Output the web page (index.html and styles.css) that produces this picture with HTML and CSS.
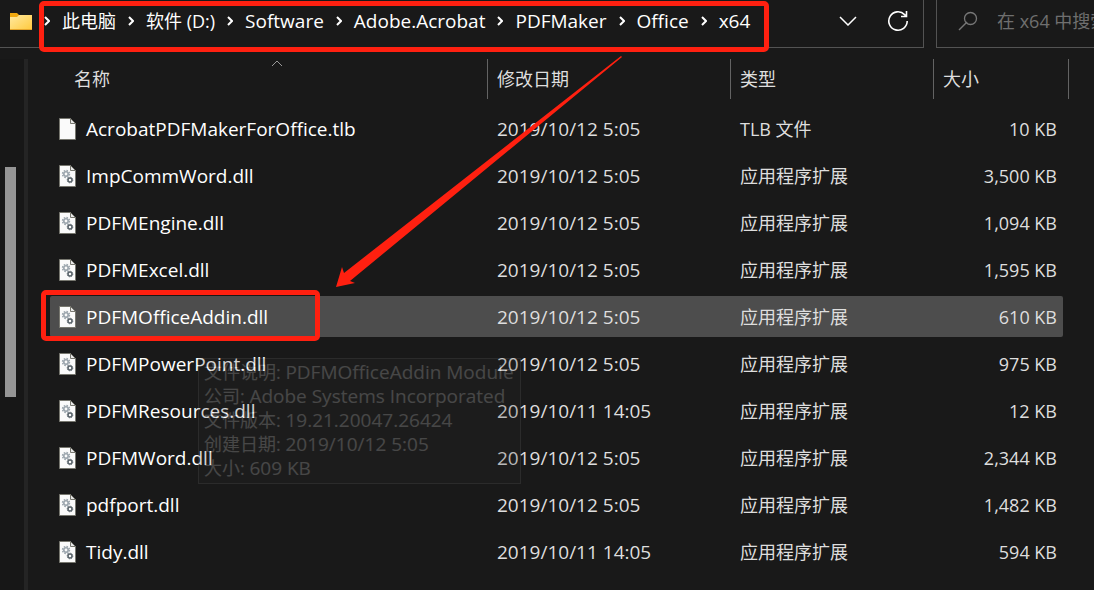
FILE: index.html
```
<!DOCTYPE html>
<html lang="zh-CN">

<head>
    <meta charset="utf-8">
    <title>x64</title>
    <link rel="stylesheet" href="styles.css">
</head>

<body>
    <!-- 公用图标 -->
    <svg class="symbols" aria-hidden="true">
        <symbol id="sep" viewBox="0 0 6 10">
            <path d="M1 1l4 4-4 4" fill="none" stroke="#fff" stroke-width="2"/>
        </symbol>
        <symbol id="file" viewBox="0 0 17 22">
            <path d="M.5.5h11l5 5v16H.5z" fill="#fafafa" stroke="#77776f"/>
            <path d="M11.5.5v5h5z" fill="#e8e8e8" stroke="#77776f"/>
        </symbol>
        <symbol id="dll" viewBox="0 0 17 22">
            <use href="#file"/>
            <circle cx="7" cy="9" r="3.5" fill="none" stroke="#9aa4ac" stroke-width="1.4" stroke-dasharray="1.6 1.15"/>
            <circle cx="7" cy="9" r="2.2" fill="none" stroke="#9aa4ac" stroke-width="1.6"/>
            <circle cx="11" cy="15" r="2.8" fill="none" stroke="#6b747b" stroke-width="1" stroke-dasharray="1.2 1"/>
            <circle cx="11" cy="15" r="2" fill="none" stroke="#59636a" stroke-width="1.5"/>
        </symbol>
    </svg>

    <div class="topbar">
        <div class="address">
            <svg class="folder" viewBox="0 0 22 17">
                <defs>
                    <linearGradient id="gold" x1="0" y1="0" x2="1" y2="1">
                        <stop offset="0" stop-color="#ffe9a0"/>
                        <stop offset="1" stop-color="#ffc93c"/>
                    </linearGradient>
                </defs>
                <path d="M0 0h7l2 2h13v5H0z" fill="#f0a80e"/>
                <path d="M0 4h7l2-2h13v15H0z" fill="url(#gold)"/>
                <path d="M0 16h22v1H0z" fill="#e5a52a"/>
            </svg>
            <nav class="crumbs">
                <svg><use href="#sep"/></svg>
                <a href="#" class="cn">此电脑</a>
                <svg><use href="#sep"/></svg>
                <a href="#" class="cn">软件 (D:)</a>
                <svg><use href="#sep"/></svg>
                <a href="#">Software</a>
                <svg><use href="#sep"/></svg>
                <a href="#">Adobe.Acrobat</a>
                <svg><use href="#sep"/></svg>
                <a href="#">PDFMaker</a>
                <svg><use href="#sep"/></svg>
                <a href="#">Office</a>
                <svg><use href="#sep"/></svg>
                <a href="#">x64</a>
            </nav>
            <button class="tool" aria-label="以前的位置">
                <svg width="18" height="10" viewBox="0 0 18 10">
                    <path d="M1 1l8 8 8-8" fill="none" stroke="#fff" stroke-width="1.5"/>
                </svg>
            </button>
            <button class="tool" aria-label="刷新">
                <svg width="22" height="22" viewBox="0 0 22 22">
                    <path d="M20.2 11a9.2 9.2 0 1 1-2.6-6.4l1.9 1.9M19.5 1v5.5H14" fill="none" stroke="#fff" stroke-width="1.6"/>
                </svg>
            </button>
        </div>
        <label class="search">
            <svg width="20" height="20" viewBox="0 0 20 20">
                <path d="M9 11L1 19" stroke="#777" stroke-width="1.4"/>
                <circle cx="12.5" cy="7.5" r="6" fill="none" stroke="#777" stroke-width="1.3"/>
            </svg>
            <input type="text" placeholder="在 x64 中搜索" aria-label="在 x64 中搜索">
        </label>
    </div>

    <div class="main">
        <div class="tree">
            <div class="thumb"></div>
        </div>
        <table class="list">
            <colgroup>
                <col>
                <col class="date">
                <col class="type">
                <col class="size">
                <col class="end">
            </colgroup>
            <thead>
                <tr>
                    <th class="name">
                        <div>名称
                            <svg class="sort" width="12" height="7" viewBox="0 0 12 7">
                                <path d="M1 6l5-5 5 5" fill="none" stroke="#999"/>
                            </svg>
                        </div>
                    </th>
                    <th><div>修改日期</div></th>
                    <th><div>类型</div></th>
                    <th colspan="2"><div>大小</div></th>
                </tr>
            </thead>
            <tbody>
                <tr>
                    <td><svg><use href="#file"/></svg>AcrobatPDFMakerForOffice.tlb</td>
                    <td>2019/10/12 5:05</td>
                    <td>TLB 文件</td>
                    <td>10 KB</td>
                    <td class="tail"></td>
                </tr>
                <tr>
                    <td><svg><use href="#dll"/></svg>ImpCommWord.dll</td>
                    <td>2019/10/12 5:05</td>
                    <td>应用程序扩展</td>
                    <td>3,500 KB</td>
                    <td class="tail"></td>
                </tr>
                <tr>
                    <td><svg><use href="#dll"/></svg>PDFMEngine.dll</td>
                    <td>2019/10/12 5:05</td>
                    <td>应用程序扩展</td>
                    <td>1,094 KB</td>
                    <td class="tail"></td>
                </tr>
                <tr>
                    <td><svg><use href="#dll"/></svg>PDFMExcel.dll</td>
                    <td>2019/10/12 5:05</td>
                    <td>应用程序扩展</td>
                    <td>1,595 KB</td>
                    <td class="tail"></td>
                </tr>
                <tr class="current">
                    <td><svg><use href="#dll"/></svg>PDFMOfficeAddin.dll</td>
                    <td>2019/10/12 5:05</td>
                    <td>应用程序扩展</td>
                    <td>610 KB</td>
                    <td class="tail"></td>
                </tr>
                <tr>
                    <td><svg><use href="#dll"/></svg>PDFMPowerPoint.dll</td>
                    <td>2019/10/12 5:05</td>
                    <td>应用程序扩展</td>
                    <td>975 KB</td>
                    <td class="tail"></td>
                </tr>
                <tr>
                    <td><svg><use href="#dll"/></svg>PDFMResources.dll</td>
                    <td>2019/10/11 14:05</td>
                    <td>应用程序扩展</td>
                    <td>12 KB</td>
                    <td class="tail"></td>
                </tr>
                <tr>
                    <td><svg><use href="#dll"/></svg>PDFMWord.dll</td>
                    <td>2019/10/12 5:05</td>
                    <td>应用程序扩展</td>
                    <td>2,344 KB</td>
                    <td class="tail"></td>
                </tr>
                <tr>
                    <td><svg><use href="#dll"/></svg>pdfport.dll</td>
                    <td>2019/10/12 5:05</td>
                    <td>应用程序扩展</td>
                    <td>1,482 KB</td>
                    <td class="tail"></td>
                </tr>
                <tr>
                    <td><svg><use href="#dll"/></svg>Tidy.dll</td>
                    <td>2019/10/11 14:05</td>
                    <td>应用程序扩展</td>
                    <td>594 KB</td>
                    <td class="tail"></td>
                </tr>
            </tbody>
        </table>
    </div>

    <!-- 正在淡出的文件提示 -->
    <div class="tip">
        <p>文件说明: <span>PDFMOfficeAddin Module</span></p>
        <p>公司: <span>Adobe Systems Incorporated</span></p>
        <p>文件版本: <span>19.21.20047.26424</span></p>
        <p>创建日期: <span>2019/10/12 5:05</span></p>
        <p>大小: <span>609 KB</span></p>
    </div>

    <!-- 红色标注 -->
    <div class="mark mark-path"></div>
    <div class="mark mark-file"></div>
    <svg class="arrow" width="288" height="232" viewBox="0 0 288 232">
        <path d="M286 0l1 1L15 225l5 2-19 4 6-20 2 6z" fill="#ff2010"/>
    </svg>
</body>

</html>
```
FILE: styles.css
```
*{
    padding: 0;
    margin: 0;
    box-sizing: border-box;
}
html,body{
    height: 100%;
}
body{
    display: flex;
    flex-direction: column;
    position: relative;
    overflow: hidden;
    background-color: #191919;
    color: #fff;
    font-family: "Open Sans", "Noto Sans CJK SC", sans-serif;
    font-size: 18px;
    line-height: 24px;
}
a{
    color: #fff;
    text-decoration: none;
}
svg{
    flex: none;
}
.symbols{
    position: absolute;
    width: 0;
    height: 0;
}

/* 地址栏 */
.topbar{
    display: flex;
    gap: 12px;
    height: 48px;
    margin-bottom: 5px;
}
.address{
    display: flex;
    flex: 1;
    align-items: center;
    padding: 0 13px 5px 10px;
    border-right: 1px solid #535353;
    border-bottom: 1px solid #535353;
}
.folder{
    width: 22px;
    height: 17px;
}
.crumbs{
    display: flex;
    flex: 1;
    align-items: center;
    gap: 12px;
    padding-left: 12px;
    font-size: 19px;
    white-space: nowrap;
}
.crumbs .cn{
    font-size: 18px;
}
.crumbs svg{
    width: 6px;
    height: 10px;
}
.tool{
    display: flex;
    align-items: center;
    justify-content: center;
    width: 24px;
    height: 32px;
    margin-left: 26px;
    border: 0;
    background: none;
}
.search{
    display: flex;
    align-items: center;
    gap: 19px;
    width: 158px;
    padding: 0 0 5px 21px;
    border-left: 1px solid #535353;
    border-bottom: 1px solid #535353;
}
.search input{
    flex: 1;
    min-width: 0;
    border: 0;
    outline: 0;
    background: none;
    color: #fff;
    font: inherit;
}
.search input::placeholder{
    color: #6f6f6f;
}

/* 文件列表 */
.main{
    display: flex;
    flex: 1;
    gap: 22px;
}
.tree{
    width: 28px;
    margin-top: 6px;
    border-right: 4px solid #242424;
    background-color: #171717;
}
.thumb{
    width: 11px;
    height: 230px;
    margin: 108px 0 0 5px;
    background-color: #959595;
}
.list{
    flex: 1;
    align-self: flex-start;
    margin-right: 25px;
    border-spacing: 0 6px;
    table-layout: fixed;
}
.list .date{
    width: 243px;
}
.list .type{
    width: 203px;
}
.list .size{
    width: 129px;
}
.list .end{
    width: 6px;
}
.list th{
    height: 43px;
    vertical-align: top;
    text-align: left;
    font-weight: 400;
    color: #dedede;
}
.list th div{
    position: relative;
    height: 40px;
    padding-left: 9px;
    border-right: 1px solid #636363;
    line-height: 40px;
}
.list .name div{
    margin-left: 16px;
    padding-left: 8px;
}
.sort{
    position: absolute;
    top: 1px;
    left: 50%;
    margin-left: -6px;
}
.list td{
    height: 41px;
    padding-left: 9px;
    color: #dedede;
    white-space: nowrap;
}
.list td:first-child{
    border-radius: 2px 0 0 2px;
    color: #fff;
    font-size: 19px;
}
.list td:nth-child(2){
    font-size: 19px;
}
.list td:nth-child(4){
    padding-right: 6px;
    border-radius: 0 2px 2px 0;
    text-align: right;
}
.list .tail{
    padding: 0;
}
.list td svg{
    width: 17px;
    height: 22px;
    margin-right: 10px;
    vertical-align: -4px;
}
.list .current td:not(.tail){
    background-color: #4d4d4d;
}

/* 提示 */
.tip{
    position: absolute;
    top: 358px;
    left: 198px;
    padding: 1px 6px 3px 5px;
    border: 1px solid #767676;
    background-color: #2b2b2b;
    opacity: .2;
    white-space: nowrap;
}
.tip span{
    font-size: 19px;
}

/* 标注 */
.mark{
    position: absolute;
    border: 5px solid #ff2010;
    border-radius: 5px;
}
.mark-path{
    top: 1px;
    left: 39px;
    width: 730px;
    height: 51px;
}
.mark-file{
    top: 290px;
    left: 41px;
    width: 279px;
    height: 51px;
}
.arrow{
    position: absolute;
    top: 56px;
    left: 335px;
}
```
